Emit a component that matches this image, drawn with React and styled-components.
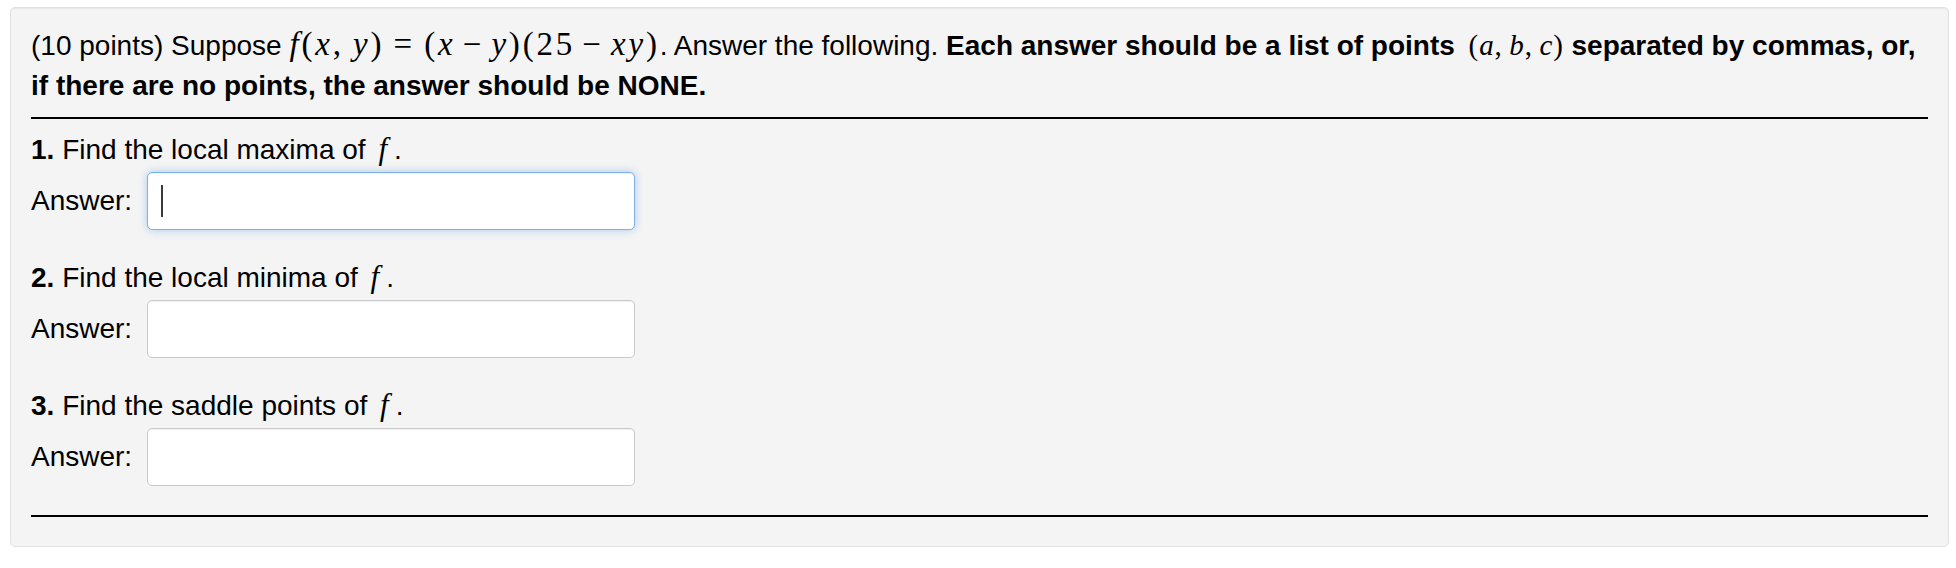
import React from "react";
import styled, { createGlobalStyle } from "styled-components";

const GlobalStyle = createGlobalStyle`
  body {
    margin: 0;
    background: #fff;
    color: #000;
    font-family: "Liberation Sans", Arial, Helvetica, sans-serif;
  }
`;

const Page = styled.div`
  padding: 7px 7px 0 10px;
`;

const Well = styled.div`
  background: #f4f4f4;
  border: 1px solid #e1e1e1;
  border-radius: 5px;
  box-shadow: inset 0 1px 1px rgba(0, 0, 0, 0.05);
  padding: 18px 20px 29px;
  font-size: 28px;
  line-height: 40px;
`;

const Statement = styled.p`
  margin: 0;
  line-height: 40px;
`;

const Rule = styled.hr`
  border: 0;
  height: 2px;
  background: #000;
  margin: ${props => props.$top}px 0 0;
`;

const Math = styled.span`
  font-family: "Liberation Serif", "Times New Roman", serif;
  font-size: ${props => props.$size}px;
  line-height: 1;
  letter-spacing: ${props => props.$spacing || 0}em;
  white-space: nowrap;
  margin: 0 ${props => props.$right || 0}px 0 ${props => props.$left || 0}px;
  i {
    font-style: italic;
  }
`;

const Op = styled.span`
  margin: 0 ${props => props.$gap}em;
`;

const Item = styled.div`
  margin-top: ${props => (props.$first ? 11 : 28)}px;
`;

const ItemTitle = styled.p`
  margin: 0 0 2px;
  line-height: 40px;
`;

const AnswerRow = styled.label`
  display: flex;
  align-items: center;
  gap: 15px;
  height: 58px;
`;

const AnswerBox = styled.span`
  position: relative;
  display: block;
  width: 488px;
  height: 58px;
  &::after {
    content: "";
    display: ${props => (props.$focused ? "block" : "none")};
    position: absolute;
    left: 14px;
    top: 13px;
    width: 2px;
    height: 32px;
    background: #3a3a3a;
  }
`;

const AnswerInput = styled.input`
  box-sizing: border-box;
  width: 100%;
  height: 100%;
  margin: 0;
  padding: 0 14px;
  background: #fff;
  border: 1px solid ${props => (props.$focused ? "#7eb0ea" : "#c9c9c9")};
  border-radius: 5px;
  box-shadow: ${props =>
    props.$focused
      ? "inset 0 1px 1px rgba(0,0,0,0.06), 0 0 8px rgba(82,150,236,0.45)"
      : "inset 0 1px 1px rgba(0,0,0,0.06)"};
  font: inherit;
  outline: none;
  caret-color: transparent;
`;

const F = () => (
  <Math $size={31} $left={5} $right={7}>
    <i>f</i>
  </Math>
);

const questions = [
  { n: 1, text: "Find the local maxima of", focused: true },
  { n: 2, text: "Find the local minima of" },
  { n: 3, text: "Find the saddle points of" }
];

const App = () => {
  return (
    <Page>
      <GlobalStyle />
      <Well>
        <Statement>
          (10 points) Suppose{" "}
          <Math $size={33} $spacing={0.085}>
            <i>f</i>(<i>x</i>,&#8201;<i>y</i>)<Op $gap={0.28}>=</Op>(<i>x</i>
            <Op $gap={0.22}>−</Op>
            <i>y</i>)(25<Op $gap={0.22}>−</Op>
            <i>xy</i>)
          </Math>
          . Answer the following. <b>Each answer should be a list of points</b>{" "}
          <Math $size={29} $spacing={0.03} $left={6}>
            (<i>a</i>,&#8201;<i>b</i>,&#8201;<i>c</i>)
          </Math>{" "}
          <b>separated by commas, or,</b>
          <br />
          <b>if there are no points, the answer should be NONE.</b>
        </Statement>
        <Rule $top={11} />
        {questions.map((q, i) => (
          <Item key={q.n} $first={i === 0}>
            <ItemTitle>
              <b>{q.n}.</b> {q.text} <F />.
            </ItemTitle>
            <AnswerRow>
              <span>Answer:</span>
              <AnswerBox $focused={q.focused}>
                <AnswerInput type="text" $focused={q.focused} aria-label={`Answer ${q.n}`} />
              </AnswerBox>
            </AnswerRow>
          </Item>
        ))}
        <Rule $top={29} />
      </Well>
    </Page>
  );
};

export default App;
